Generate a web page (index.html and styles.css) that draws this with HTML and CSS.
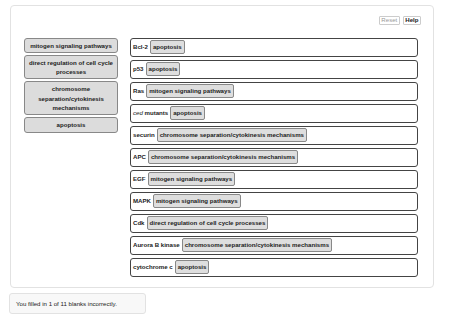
FILE: index.html
```html
<!DOCTYPE html>
<html lang="en">

<head>
    <meta charset="UTF-8">
    <meta name="viewport" content="width=device-width, initial-scale=1.0">
    <title>Cell Cycle Regulators</title>
    <link rel="stylesheet" href="styles.css">
</head>

<body>
    <div class="panel">
        <div class="toolbar">
            <button class="tool-btn disabled">Reset</button>
            <button class="tool-btn">Help</button>
        </div>

        <div class="columns">
            <div class="bank">
                <div class="bank-item">mitogen signaling pathways</div>
                <div class="bank-item">direct regulation of cell cycle processes</div>
                <div class="bank-item">chromosome separation/cytokinesis mechanisms</div>
                <div class="bank-item">apoptosis</div>
            </div>

            <div class="targets">
                <div class="row"><span class="label">Bcl-2</span><span class="chip">apoptosis</span></div>
                <div class="row"><span class="label">p53</span><span class="chip">apoptosis</span></div>
                <div class="row"><span class="label">Ras</span><span class="chip">mitogen signaling pathways</span></div>
                <div class="row"><span class="label"><i>ced</i> mutants</span><span class="chip">apoptosis</span></div>
                <div class="row"><span class="label">securin</span><span class="chip">chromosome separation/cytokinesis mechanisms</span></div>
                <div class="row"><span class="label">APC</span><span class="chip">chromosome separation/cytokinesis mechanisms</span></div>
                <div class="row"><span class="label">EGF</span><span class="chip">mitogen signaling pathways</span></div>
                <div class="row"><span class="label">MAPK</span><span class="chip">mitogen signaling pathways</span></div>
                <div class="row"><span class="label">Cdk</span><span class="chip">direct regulation of cell cycle processes</span></div>
                <div class="row"><span class="label">Aurora B kinase</span><span class="chip">chromosome separation/cytokinesis mechanisms</span></div>
                <div class="row"><span class="label">cytochrome c</span><span class="chip">apoptosis</span></div>
            </div>
        </div>
    </div>

    <div class="feedback">You filled in 1 of 11 blanks incorrectly.</div>
</body>

</html>
```

FILE: styles.css
```css
body {
    margin: 0;
    background-color: white;
    font-family: "Liberation Sans", Arial, sans-serif;
    font-size: 6.1px;
    color: #222;
}

.panel {
    margin: 5px 0 0 10px;
    width: 424px;
    height: 283px;
    box-sizing: border-box;
    border: 1px solid #e2e2e2;
    border-radius: 4px;
    padding: 10px 12px 12px 13px;
}

.toolbar {
    display: flex;
    justify-content: flex-end;
    gap: 3px;
    margin-bottom: 13px;
}

.tool-btn {
    height: 8.5px;
    padding: 0 1.5px;
    font-family: inherit;
    font-size: 6.1px;
    font-weight: bold;
    line-height: 6px;
    color: #222;
    background-color: white;
    border: 1px solid #ccc;
    border-radius: 1px;
}

.tool-btn.disabled {
    font-weight: normal;
    color: #999;
}

.columns {
    display: flex;
    gap: 12px;
}

.bank {
    width: 94px;
    display: flex;
    flex-direction: column;
    gap: 2px;
}

.bank-item {
    box-sizing: border-box;
    padding: 2px 4px;
    line-height: 9.3px;
    font-weight: bold;
    text-align: center;
    background-color: #dcdcdc;
    border: 1px solid #888;
    border-radius: 3px;
}

.targets {
    width: 288px;
    display: flex;
    flex-direction: column;
    gap: 2.5px;
}

.row {
    height: 19.5px;
    box-sizing: border-box;
    display: flex;
    align-items: center;
    gap: 2px;
    padding: 0 2px;
    line-height: 12px;
    background-color: white;
    border: 1px solid #444;
    border-radius: 3px;
}

.label {
    font-weight: bold;
    white-space: nowrap;
}

.label i {
    font-weight: normal;
}

.chip {
    height: 14px;
    box-sizing: border-box;
    padding: 0 2px;
    line-height: 12px;
    font-weight: bold;
    white-space: nowrap;
    background-color: #dedede;
    border: 1px solid #888;
    border-radius: 2px;
}

.feedback {
    margin: 5px 0 0 9px;
    width: 137px;
    height: 21px;
    box-sizing: border-box;
    padding: 0 6px;
    line-height: 19px;
    background-color: #f8f8f8;
    border: 1px solid #e2e2e2;
    border-radius: 3px;
}
```
